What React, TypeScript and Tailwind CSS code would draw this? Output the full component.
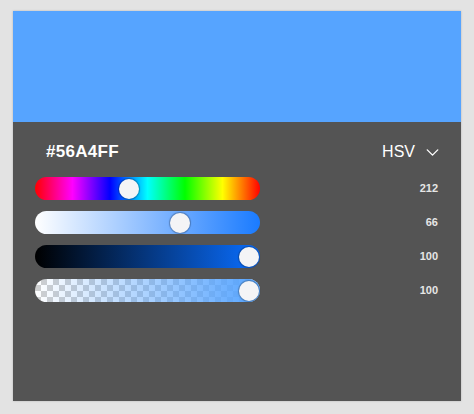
import { ChevronDown } from 'lucide-react';

type Channel = {
  key: string;
  value: number;
  max: number;
  track: string;
  checker?: boolean;
};

const channels: Channel[] = [
  {
    key: 'h',
    value: 212,
    max: 360,
    track:
      'bg-[linear-gradient(to_right,#ff0000,#ff00ff,#0000ff,#00ffff,#00ff00,#ffff00,#ff0000)]',
  },
  {
    key: 's',
    value: 66,
    max: 100,
    track: 'bg-[linear-gradient(to_right,#ffffff,#1a7bff)]',
  },
  {
    key: 'v',
    value: 100,
    max: 100,
    track: 'bg-[linear-gradient(to_right,#000000,#0a6eff)]',
  },
  {
    key: 'a',
    value: 100,
    max: 100,
    track: 'bg-[linear-gradient(to_right,rgba(86,164,255,0),#56a4ff)]',
    checker: true,
  },
];

const TRACK_W = 225;
const THUMB = 20;
const INSET = 11;

function Slider({ channel }: { channel: Channel }) {
  // hue runs right to left on this picker
  const frac =
    channel.key === 'h'
      ? 1 - channel.value / channel.max
      : channel.value / channel.max;
  const left = INSET + frac * (TRACK_W - INSET * 2) - THUMB / 2;

  return (
    <div className="relative h-[23px] w-[225px] shrink-0">
      <div className="absolute inset-0 overflow-hidden rounded-full">
        {channel.checker && (
          <div className="absolute inset-0 bg-[repeating-conic-gradient(#cfcfcf_0%_25%,#ffffff_0%_50%)] bg-[length:12px_12px]" />
        )}
        <div className={`absolute inset-0 ${channel.track}`} />
      </div>
      <div
        className="absolute top-1/2 h-[20px] w-[20px] -translate-y-1/2 rounded-full bg-[#f4f4f6] shadow-[0_0_1px_1px_rgba(0,0,0,0.25)]"
        style={{ left }}
      />
    </div>
  );
}

export default function App() {
  return (
    <div className="min-h-[414px] w-full bg-[#e3e3e3] px-[13px] pt-[11px] font-['Liberation_Sans',Arial,sans-serif]">
      <div className="flex h-[390px] w-[448px] flex-col shadow-[0_0_2px_rgba(0,0,0,0.2)]">
        <div className="h-[111px] bg-[#56a4ff]" />
        <div className="flex flex-1 flex-col bg-[#545454] pl-[22px] pr-[23px] pt-[18px]">
          <div className="flex h-[24px] items-center justify-between pl-[11px]">
            <span className="text-[17px] font-bold tracking-[0.3px] text-white">
              #56A4FF
            </span>
            <div className="flex items-center gap-[7px] text-white">
              <span className="text-[16px]">HSV</span>
              <ChevronDown size={21} strokeWidth={1.6} className="mr-[-5px]" />
            </div>
          </div>
          <div className="mt-[13px] flex flex-col gap-[11px]">
            {channels.map((c) => (
              <div key={c.key} className="flex items-center justify-between">
                <Slider channel={c} />
                <span className="text-[11px] font-bold text-[#e6e6e6]">
                  {c.value}
                </span>
              </div>
            ))}
          </div>
        </div>
      </div>
    </div>
  );
}
